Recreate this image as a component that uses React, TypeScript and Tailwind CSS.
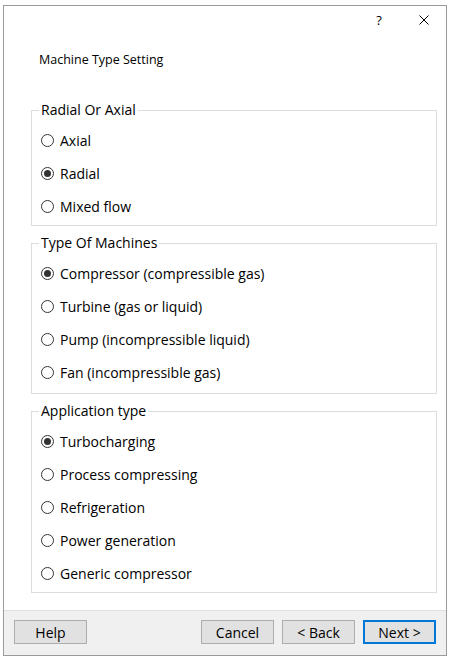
import React from "react";

const FONT = { fontFamily: '"Segoe UI", "Open Sans", "Noto Sans", sans-serif' };

function Radio({ label, checked }: { label: string; checked?: boolean }) {
  return (
    <div className="flex h-[33px] items-center pl-[9px]">
      <span className="flex h-[13px] w-[13px] items-center justify-center rounded-full border border-[#333333] bg-white">
        {checked && <span className="h-[7px] w-[7px] rounded-full bg-[#333333]" />}
      </span>
      <span className="ml-[6px] text-[14px] leading-[20px] text-black">{label}</span>
    </div>
  );
}

function Group({
  title,
  items,
  selected,
  pb,
}: {
  title: string;
  items: string[];
  selected: number;
  pb: string;
}) {
  return (
    <div className={`relative border border-[#dcdcdc] pt-[13px] ${pb}`}>
      <span className="absolute -top-[11px] left-[7px] bg-white px-[2px] text-[14px] leading-[20px] text-black">
        {title}
      </span>
      {items.map((it, i) => (
        <Radio key={it} label={it} checked={i === selected} />
      ))}
    </div>
  );
}

function Btn({ label, primary }: { label: string; primary?: boolean }) {
  return (
    <div
      className={`flex h-[24px] w-[73px] items-center justify-center bg-[#e1e1e1] pt-[1px] text-[14px] leading-none text-black ${
        primary ? "border-2 border-[#0078d7]" : "border border-[#adadad]"
      }`}
    >
      {label}
    </div>
  );
}

export default function App() {
  return (
    <div className="h-[662px] w-[450px] overflow-hidden bg-white pl-[3px] pt-[5px]" style={FONT}>
      <div className="flex h-[651px] w-[444px] flex-col border border-[#9a9a9a] bg-white">
        <div className="flex h-[28px] items-center justify-end pr-[17px]">
          <span className="w-[10px] text-center text-[13px] leading-none text-black">?</span>
          <svg className="ml-[35px]" width="10" height="10" viewBox="0 0 10 10">
            <path d="M0.5 0.5 L9.5 9.5 M9.5 0.5 L0.5 9.5" stroke="#000" strokeWidth="1" fill="none" />
          </svg>
        </div>
        <div className="mt-[16px] pl-[35px] text-[12.5px] leading-[20px] text-black">Machine Type Setting</div>
        <div className="mt-[40px] flex flex-col gap-[17px] pl-[27px] pr-[9px]">
          <Group
            title="Radial Or Axial"
            items={["Axial", "Radial", "Mixed flow"]}
            selected={1}
            pb="pb-[2px]"
          />
          <Group
            title="Type Of Machines"
            items={[
              "Compressor (compressible gas)",
              "Turbine (gas or liquid)",
              "Pump (incompressible liquid)",
              "Fan (incompressible gas)",
            ]}
            selected={0}
            pb="pb-[4px]"
          />
          <Group
            title="Application type"
            items={[
              "Turbocharging",
              "Process compressing",
              "Refrigeration",
              "Power generation",
              "Generic compressor",
            ]}
            selected={0}
            pb="pb-[2px]"
          />
        </div>
        <div className="mt-auto flex h-[45px] border-t border-[#dfdfdf] bg-[#f0f0f0] px-[10px] pt-[9px]">
          <Btn label="Help" />
          <div className="flex-1" />
          <div className="flex gap-[8px]">
            <Btn label="Cancel" />
            <Btn label="< Back" />
            <Btn label="Next >" primary />
          </div>
        </div>
      </div>
    </div>
  );
}
